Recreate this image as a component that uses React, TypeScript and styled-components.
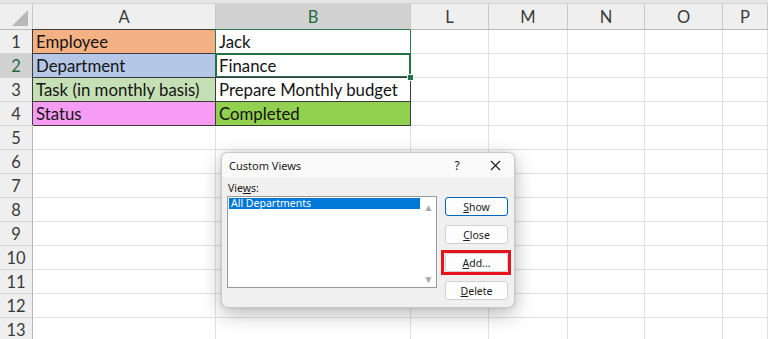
import React from 'react';
import styled, { createGlobalStyle } from 'styled-components';

const GlobalStyle = createGlobalStyle`
  html, body {
    margin: 0;
    padding: 0;
    background: #ffffff;
  }
  #root {
    width: 768px;
    height: 339px;
    overflow: hidden;
  }
`;

const COLS = ['33px', '183px', '195px', '78px', '79px', '77px', '78px', '1fr'];
const HEADERS = ['A', 'B', 'L', 'M', 'N', 'O', 'P'];

type CellData = { text: string; bg?: string; border?: string; active?: boolean };

const DATA: CellData[][] = [
  [
    { text: 'Employee', bg: '#f4b183', border: '#3b3b3b' },
    { text: 'Jack', border: '#2e7d4f' }
  ],
  [
    { text: 'Department', bg: '#b4c7e7', border: '#3b3b3b' },
    { text: 'Finance', border: '#2e7d4f', active: true }
  ],
  [
    { text: 'Task (in monthly basis)', bg: '#c5e0b4', border: '#3b3b3b' },
    { text: 'Prepare Monthly budget', border: '#3b3b3b' }
  ],
  [
    { text: 'Status', bg: '#f79cf4', border: '#3b3b3b' },
    { text: 'Completed', bg: '#92d050', border: '#3b3b3b' }
  ]
];

const App: React.FC = () => {
  const rows = Array.from({ length: 13 }, (_, i) => i + 1);

  return (
    <Page>
      <GlobalStyle />
      <TopBand />
      <Sheet>
        <Corner>
          <CornerTriangle />
        </Corner>
        {HEADERS.map((h) => (
          <ColHeader key={h} selected={h === 'B'}>
            {h}
          </ColHeader>
        ))}
        {rows.map((r) => (
          <React.Fragment key={r}>
            <RowHeader selected={r === 2}>{r}</RowHeader>
            {HEADERS.map((h, ci) => {
              const d = DATA[r - 1] && ci < 2 ? DATA[r - 1][ci] : undefined;
              return (
                <Cell
                  key={h}
                  bg={d?.bg}
                  edge={d?.border}
                  active={d?.active}
                >
                  {d?.text}
                </Cell>
              );
            })}
          </React.Fragment>
        ))}
      </Sheet>

      <Dialog>
        <DialogTitle>
          <TitleText>Custom Views</TitleText>
          <TitleButton>?</TitleButton>
          <TitleButton>
            <svg width="11" height="11" viewBox="0 0 11 11">
              <path d="M1 1 L10 10 M10 1 L1 10" stroke="#1a1a1a" strokeWidth="1.1" />
            </svg>
          </TitleButton>
        </DialogTitle>
        <DialogBody>
          <ListColumn>
            <Label>
              Vie<u>w</u>s:
            </Label>
            <ListBox>
              <ListItems>
                <ListItem selected>All Departments</ListItem>
              </ListItems>
              <ScrollBar>
                <Arrow>▲</Arrow>
                <Arrow>▼</Arrow>
              </ScrollBar>
            </ListBox>
          </ListColumn>
          <ButtonColumn>
            <DialogButton primary>
              <u>S</u>how
            </DialogButton>
            <DialogButton>
              <u>C</u>lose
            </DialogButton>
            <Highlight>
              <DialogButton>
                <u>A</u>dd...
              </DialogButton>
            </Highlight>
            <DialogButton>
              <u>D</u>elete
            </DialogButton>
          </ButtonColumn>
        </DialogBody>
      </Dialog>
    </Page>
  );
};

export default App;

const Page = styled.div`
  position: relative;
  width: 768px;
  height: 339px;
  overflow: hidden;
  font-family: Lato, 'Liberation Sans', sans-serif;
`;

const TopBand = styled.div`
  height: 3px;
  background: #e6e6e6;
  border-bottom: 1px solid #d4d4d4;
`;

const Sheet = styled.div`
  display: grid;
  grid-template-columns: ${COLS.join(' ')};
  grid-template-rows: 26px repeat(13, 24px);
`;

const Corner = styled.div`
  position: relative;
  background: #efefef;
  border-right: 1px solid #c8c8c8;
  border-bottom: 1px solid #b8b8b8;
`;

const CornerTriangle = styled.div`
  position: absolute;
  right: 4px;
  bottom: 3px;
  width: 0;
  height: 0;
  border-left: 16px solid transparent;
  border-bottom: 16px solid #b8b8b8;
`;

const ColHeader = styled.div<{ selected?: boolean }>`
  display: flex;
  align-items: center;
  justify-content: center;
  background: ${(p) => (p.selected ? '#d2d2d2' : '#efefef')};
  color: ${(p) => (p.selected ? '#1e6b3e' : '#3a3a3a')};
  border-right: 1px solid #c8c8c8;
  border-bottom: 1px solid ${(p) => (p.selected ? '#217346' : '#b8b8b8')};
  font-size: 16.5px;
  padding-top: 1px;
`;

const RowHeader = styled.div<{ selected?: boolean }>`
  display: flex;
  align-items: center;
  justify-content: center;
  background: ${(p) => (p.selected ? '#d2d2d2' : '#efefef')};
  color: ${(p) => (p.selected ? '#1e6b3e' : '#3a3a3a')};
  border-right: 1px solid ${(p) => (p.selected ? '#217346' : '#b8b8b8')};
  border-bottom: 1px solid #d4d4d4;
  font-size: 16.5px;
`;

const Cell = styled.div<{ bg?: string; edge?: string; active?: boolean }>`
  position: relative;
  display: flex;
  align-items: center;
  padding: 0 3px;
  white-space: nowrap;
  overflow: visible;
  font-size: 16.8px;
  color: #141414;
  background: ${(p) => p.bg || '#ffffff'};
  border-right: 1px solid ${(p) => p.edge || '#e1e1e1'};
  border-bottom: 1px solid ${(p) => p.edge || '#e1e1e1'};
  box-shadow: ${(p) => (p.edge ? `-1px -1px 0 ${p.edge}` : 'none')};

  ${(p) =>
    p.active &&
    `
    &::after {
      content: '';
      position: absolute;
      inset: -1px -1px -1px -1px;
      border: 2px solid #217346;
      pointer-events: none;
    }
    &::before {
      content: '';
      position: absolute;
      right: -4px;
      bottom: -4px;
      width: 5px;
      height: 5px;
      background: #217346;
      border: 1px solid #ffffff;
      z-index: 2;
    }
  `}
`;

const Dialog = styled.div`
  position: absolute;
  left: 221px;
  top: 152px;
  width: 292px;
  height: 154px;
  border: 1px solid #c9c9c9;
  border-radius: 7px;
  background: #f0f0f0;
  box-shadow: 0 6px 20px rgba(0, 0, 0, 0.28), 0 0 3px rgba(0, 0, 0, 0.12);
  overflow: hidden;
  display: flex;
  flex-direction: column;
  font-family: 'Noto Sans', 'Open Sans', sans-serif;
  font-size: 10px;
  color: #1a1a1a;
`;

const DialogTitle = styled.div`
  display: flex;
  align-items: center;
  height: 24px;
  padding: 0 12px 0 7px;
  background: #fafafa;
  gap: 24px;
`;

const TitleText = styled.div`
  flex: 1;
  font-size: 11px;
`;

const TitleButton = styled.div`
  display: flex;
  align-items: center;
  justify-content: center;
  width: 14px;
  font-size: 12px;
`;

const DialogBody = styled.div`
  flex: 1;
  display: flex;
  gap: 8px;
  padding: 4px 5px 0 5px;
`;

const ListColumn = styled.div`
  display: flex;
  flex-direction: column;
  gap: 1px;
`;

const Label = styled.div`
  font-size: 10.5px;
  line-height: 14px;
  padding-left: 1px;
`;

const ListBox = styled.div`
  display: flex;
  width: 208px;
  height: 90px;
  background: #ffffff;
  border: 1px solid #9a9a9a;
`;

const ListItems = styled.div`
  flex: 1;
  padding: 1px;
`;

const ListItem = styled.div<{ selected?: boolean }>`
  height: 11px;
  line-height: 11px;
  padding-left: 2px;
  font-size: 10.5px;
  background: ${(p) => (p.selected ? '#0078d7' : 'transparent')};
  color: ${(p) => (p.selected ? '#ffffff' : '#1a1a1a')};
`;

const ScrollBar = styled.div`
  width: 15px;
  display: flex;
  flex-direction: column;
  justify-content: space-between;
  align-items: center;
  padding: 3px 0 1px;
`;

const Arrow = styled.span`
  font-size: 10px;
  color: #a8a8a8;
`;

const ButtonColumn = styled.div`
  display: flex;
  flex-direction: column;
  gap: 9px;
  padding-top: 16px;
`;

const DialogButton = styled.div<{ primary?: boolean }>`
  width: 61px;
  height: 17px;
  display: flex;
  align-items: center;
  justify-content: center;
  background: #fdfdfd;
  border: 1px solid ${(p) => (p.primary ? '#0067c0' : '#d0d0d0')};
  border-radius: 3px;
  font-size: 10.5px;
`;

const Highlight = styled.div`
  margin: -3px -2px -3px -4px;
  padding: 0 0 0 1px;
  border: 3px solid #e5141b;
`;
